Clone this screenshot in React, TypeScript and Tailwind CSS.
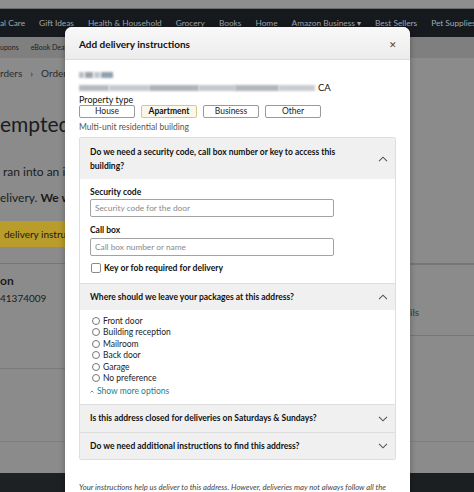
import React from "react";

function Chevron({ up }: { up?: boolean }) {
  return (
    <svg width="10" height="6" viewBox="0 0 10 6" className="shrink-0">
      <path
        d={up ? "M1 5.2 L5 1.2 L9 5.2" : "M1 0.8 L5 4.8 L9 0.8"}
        fill="none"
        stroke="#555"
        strokeWidth="1.1"
      />
    </svg>
  );
}

function Blur({ w, c }: { w: number; c: string }) {
  return <span className="inline-block h-[6px] blur-[0.8px]" style={{ width: w, background: c }} />;
}

const radios = ["Front door", "Building reception", "Mailroom", "Back door", "Garage", "No preference"];

export default function App() {
  return (
    <div className="relative h-[492px] w-[474px] overflow-hidden bg-[#8b8b8b] font-['Lato',sans-serif] text-[#1c1c1c]">
      {/* dimmed page behind */}
      <div className="h-[9px] border-b border-[#6a6a6a] bg-[#8e8e8e]" />
      <div className="flex h-[28px] items-center gap-[14px] whitespace-nowrap bg-[#161a1f] text-[8.3px] text-[#a3a7ab]">
        <span>al Care</span>
        <span>Gift Ideas</span>
        <span>Health &amp; Household</span>
        <span>Grocery</span>
        <span>Books</span>
        <span>Home</span>
        <span>Amazon Business ▾</span>
        <span>Best Sellers</span>
        <span>Pet Supplies</span>
      </div>
      <div className="flex h-[21px] items-center gap-[12px] whitespace-nowrap bg-[#7f7f7f] text-[7px] text-[#1e1e1e]">
        <span>upons</span>
        <span>eBook Deals</span>
      </div>
      <div className="mt-[8px] flex h-[14px] items-center gap-[8px] whitespace-nowrap text-[10px] text-[#2b2b2b]">
        <span>rders</span>
        <span>›</span>
        <span>Order Details</span>
      </div>
      <div className="mt-[31px] whitespace-nowrap text-[21px] leading-[26px] text-[#1b1b1b]">empted delivery</div>
      <div className="mt-[22px] whitespace-nowrap text-[12px] leading-[26px] text-[#1b1b1b]">
        <div className="pl-[3px]">ran into an issue</div>
        <div>
          elivery. <b>We will</b>
        </div>
      </div>
      <div className="mt-[10px] flex h-[26px] w-[90px] items-center whitespace-nowrap rounded-r-[6px] bg-[#b99c2a] pl-[4px] text-[10px] text-[#1b1b1b]">
        delivery instructions
      </div>
      <div className="mt-[16px] border-t border-[#767676]" />
      <div className="mt-[10px] whitespace-nowrap text-[12px] font-bold leading-[14px] text-[#1b1b1b]">on</div>
      <div className="mt-[4px] whitespace-nowrap text-[10px] leading-[12px] text-[#1b1b1b]">41374009</div>
      <div className="mt-[64px] w-[65px] border-t border-[#7a7a7a]" />
      <div className="mt-[72px] border-t border-[#7f7f7f]" />
      <div className="mt-[31px] flex h-[20px] justify-between">
        <div className="w-[65px] bg-[#1d2124]" />
        <div className="w-[64px] bg-[#1b1f22]" />
      </div>
      <div className="absolute left-[410px] top-[264px] h-[72px] w-[64px] border-y border-[#777]">
        <span className="absolute left-[0px] top-[42px] text-[10px] leading-none text-[#2a3a3a]">ils</span>
      </div>

      {/* modal */}
      <div className="absolute left-[65px] top-[27px] h-[480px] w-[345px] overflow-hidden rounded-t-[7px] bg-white shadow-[0_0_6px_rgba(0,0,0,0.3)]">
        <div className="flex h-[33px] items-center justify-between border-b border-[#dcdcdc] bg-gradient-to-b from-[#f8f8f8] to-[#ececec] pl-[14px] pr-[13px]">
          <span className="pt-[2px] text-[10px] font-bold text-[#111]">Add delivery instructions</span>
          <span className="pt-[2px] text-[9px] leading-none text-[#444]">✕</span>
        </div>
        <div className="px-[14px]">
          <div className="mt-[12px] flex h-[6px] gap-[1px]">
            <Blur w={5} c="#b9bec3" />
            <Blur w={8} c="#9aa3ab" />
            <Blur w={6} c="#c2c6ca" />
            <Blur w={12} c="#8fa0b0" />
          </div>
          <div className="mt-[5px] flex h-[10px] items-center">
            <Blur w={30} c="#b6bbc0" />
            <Blur w={40} c="#c7cacd" />
            <Blur w={50} c="#aeb4ba" />
            <Blur w={36} c="#c4c8cb" />
            <Blur w={44} c="#b0b6bc" />
            <Blur w={36} c="#c9ccce" />
            <span className="ml-[3px] text-[9.5px] leading-none text-[#111]">CA</span>
          </div>
          <div className="mt-[1px] text-[9px] leading-[11px] text-[#111]">Property type</div>
          <div className="flex gap-[6px]">
            {["House", "Apartment", "Business", "Other"].map((t) => (
              <div
                key={t}
                className={`flex h-[13px] w-[56px] items-center justify-center rounded-[2px] border text-[8.5px] leading-none ${
                  t === "Apartment"
                    ? "border-[#d9c48f] bg-[#fcf7e8] font-bold text-[#111]"
                    : "border-[#9a9a9a] bg-white text-[#222]"
                }`}
              >
                {t}
              </div>
            ))}
          </div>
          <div className="mt-[3px] text-[8.5px] leading-[12px] text-[#555]">Multi-unit residential building</div>

          <div className="mt-[4px] rounded-[2px] border border-[#dedede]">
            <div className="flex h-[41px] items-center justify-between bg-[#f0f0f0] pl-[10px] pr-[7px]">
              <span className="w-[262px] text-[8.5px] font-bold leading-[14px] text-[#111]">
                Do we need a security code, call box number or key to access this building?
              </span>
              <Chevron up />
            </div>
            <div className="px-[10px] pb-[9px] pt-[7px]">
              <div className="text-[8.5px] font-bold leading-[12px] text-[#111]">Security code</div>
              <div className="mt-[1px] flex h-[18px] w-[244px] items-center rounded-[2px] border border-[#a2a2a2] px-[4px] text-[8.3px] text-[#8a8a8a]">
                Security code for the door
              </div>
              <div className="mt-[7px] text-[8.5px] font-bold leading-[12px] text-[#111]">Call box</div>
              <div className="mt-[2px] flex h-[18px] w-[244px] items-center rounded-[2px] border border-[#a2a2a2] px-[4px] text-[8.3px] text-[#8a8a8a]">
                Call box number or name
              </div>
              <div className="mt-[6px] flex h-[12px] items-center gap-[3px] pl-[1px]">
                <span className="h-[10px] w-[10px] rounded-[2px] border border-[#8a8a8a] bg-white" />
                <span className="text-[8.6px] font-bold leading-[12px] text-[#111]">Key or fob required for delivery</span>
              </div>
            </div>
            <div className="flex h-[27px] items-center justify-between border-t border-[#dedede] bg-[#f0f0f0] pl-[10px] pr-[7px]">
              <span className="text-[8.5px] font-bold text-[#111]">Where should we leave your packages at this address?</span>
              <Chevron up />
            </div>
            <div className="px-[10px] pb-[7px] pt-[5px]">
              {radios.map((r) => (
                <div key={r} className="flex h-[11.5px] items-center gap-[3px] pl-[2px]">
                  <span className="h-[8px] w-[8px] rounded-full border border-[#777] bg-white" />
                  <span className="text-[8.5px] leading-none text-[#222]">{r}</span>
                </div>
              ))}
              <div className="mt-[1px] flex h-[12px] items-center gap-[3px] text-[8.5px] text-[#1a7f8c]">
                <svg width="4" height="3" viewBox="0 0 4 3">
                  <path d="M0.5 2.5 L2 1 L3.5 2.5" fill="none" stroke="#666" strokeWidth="0.8" />
                </svg>
                Show more options
              </div>
            </div>
            <div className="flex h-[28px] items-center justify-between border-t border-[#dedede] bg-[#f0f0f0] pl-[10px] pr-[7px]">
              <span className="text-[8.5px] font-bold text-[#111]">Is this address closed for deliveries on Saturdays &amp; Sundays?</span>
              <Chevron />
            </div>
            <div className="flex h-[27px] items-center justify-between border-t border-[#dedede] bg-[#f0f0f0] pl-[10px] pr-[7px]">
              <span className="text-[8.5px] font-bold text-[#111]">Do we need additional instructions to find this address?</span>
              <Chevron />
            </div>
          </div>
          <div className="mt-[21px] whitespace-nowrap text-[7.7px] italic leading-[12px] text-[#444]">
            Your instructions help us deliver to this address. However, deliveries may not always follow all the
          </div>
        </div>
      </div>
    </div>
  );
}
